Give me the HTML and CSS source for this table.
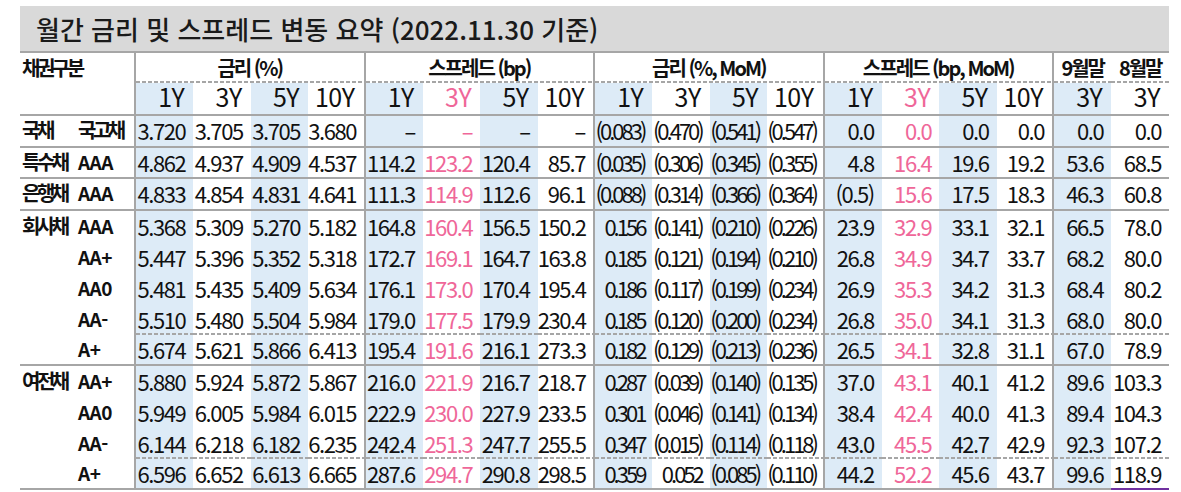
FILE: index.html
```html
<!DOCTYPE html>
<html lang="ko">
<head>
<meta charset="utf-8">
<title>월간 금리 및 스프레드 변동 요약</title>
<link rel="stylesheet" href="styles.css">
</head>
<body>
<div class="page">
  <div class="title">월간 금리 및 스프레드 변동 요약 (2022.11.30 기준)</div>
  <table class="summary">
    <colgroup>
      <col class="c-cat"><col class="c-sub">
      <col><col><col><col>
      <col><col><col><col>
      <col><col><col><col>
      <col><col><col><col>
      <col><col>
    </colgroup>
    <thead>
      <tr class="h1">
        <th colspan="2" class="cat gr">채권구분</th>
        <th colspan="4" class="g gr">금리 (%)</th>
        <th colspan="4" class="g gr">스프레드 (bp)</th>
        <th colspan="4" class="g gr">금리 (%, MoM)</th>
        <th colspan="4" class="g gr">스프레드 (bp, MoM)</th>
        <th class="g">9월말</th>
        <th class="g">8월말</th>
      </tr>
      <tr class="h2">
        <th colspan="2" class="gr"></th>
        <th class="b">1Y</th><th>3Y</th><th class="b">5Y</th><th class="gr">10Y</th>
        <th class="b">1Y</th><th class="p">3Y</th><th class="b">5Y</th><th class="gr">10Y</th>
        <th class="b">1Y</th><th>3Y</th><th class="b">5Y</th><th class="gr">10Y</th>
        <th class="b">1Y</th><th class="p">3Y</th><th class="b">5Y</th><th class="gr">10Y</th>
        <th class="b">3Y</th><th>3Y</th>
      </tr>
    </thead>
    <tbody>
      <tr class="sep tall">
        <td class="k">국채</td><td class="k gr">국고채</td>
        <td class="b">3.720</td><td>3.705</td><td class="b">3.705</td><td class="gr">3.680</td>
        <td class="b">–</td><td class="p">–</td><td class="b">–</td><td class="gr">–</td>
        <td class="b m">(0.083)</td><td class="m">(0.470)</td><td class="b m">(0.541)</td><td class="m gr">(0.547)</td>
        <td class="b">0.0</td><td class="p">0.0</td><td class="b">0.0</td><td class="gr">0.0</td>
        <td class="b">0.0</td><td>0.0</td>
      </tr>
      <tr class="sep">
        <td class="k">특수채</td><td class="s gr">AAA</td>
        <td class="b">4.862</td><td>4.937</td><td class="b">4.909</td><td class="gr">4.537</td>
        <td class="b">114.2</td><td class="p">123.2</td><td class="b">120.4</td><td class="gr">85.7</td>
        <td class="b m">(0.035)</td><td class="m">(0.306)</td><td class="b m">(0.345)</td><td class="m gr">(0.355)</td>
        <td class="b">4.8</td><td class="p">16.4</td><td class="b">19.6</td><td class="gr">19.2</td>
        <td class="b">53.6</td><td>68.5</td>
      </tr>
      <tr class="sep tall">
        <td class="k">은행채</td><td class="s gr">AAA</td>
        <td class="b">4.833</td><td>4.854</td><td class="b">4.831</td><td class="gr">4.641</td>
        <td class="b">111.3</td><td class="p">114.9</td><td class="b">112.6</td><td class="gr">96.1</td>
        <td class="b m">(0.088)</td><td class="m">(0.314)</td><td class="b m">(0.366)</td><td class="m gr">(0.364)</td>
        <td class="b">(0.5)</td><td class="p">15.6</td><td class="b">17.5</td><td class="gr">18.3</td>
        <td class="b">46.3</td><td>60.8</td>
      </tr>
      <tr>
        <td class="k">회사채</td><td class="s gr">AAA</td>
        <td class="b">5.368</td><td>5.309</td><td class="b">5.270</td><td class="gr">5.182</td>
        <td class="b">164.8</td><td class="p">160.4</td><td class="b">156.5</td><td class="gr">150.2</td>
        <td class="b m">0.156</td><td class="m">(0.141)</td><td class="b m">(0.210)</td><td class="m gr">(0.226)</td>
        <td class="b">23.9</td><td class="p">32.9</td><td class="b">33.1</td><td class="gr">32.1</td>
        <td class="b">66.5</td><td>78.0</td>
      </tr>
      <tr>
        <td class="k"></td><td class="s gr">AA+</td>
        <td class="b">5.447</td><td>5.396</td><td class="b">5.352</td><td class="gr">5.318</td>
        <td class="b">172.7</td><td class="p">169.1</td><td class="b">164.7</td><td class="gr">163.8</td>
        <td class="b m">0.185</td><td class="m">(0.121)</td><td class="b m">(0.194)</td><td class="m gr">(0.210)</td>
        <td class="b">26.8</td><td class="p">34.9</td><td class="b">34.7</td><td class="gr">33.7</td>
        <td class="b">68.2</td><td>80.0</td>
      </tr>
      <tr>
        <td class="k"></td><td class="s gr">AA0</td>
        <td class="b">5.481</td><td>5.435</td><td class="b">5.409</td><td class="gr">5.634</td>
        <td class="b">176.1</td><td class="p">173.0</td><td class="b">170.4</td><td class="gr">195.4</td>
        <td class="b m">0.186</td><td class="m">(0.117)</td><td class="b m">(0.199)</td><td class="m gr">(0.234)</td>
        <td class="b">26.9</td><td class="p">35.3</td><td class="b">34.2</td><td class="gr">31.3</td>
        <td class="b">68.4</td><td>80.2</td>
      </tr>
      <tr class="dash">
        <td class="k"></td><td class="s gr">AA-</td>
        <td class="b">5.510</td><td>5.480</td><td class="b">5.504</td><td class="gr">5.984</td>
        <td class="b">179.0</td><td class="p">177.5</td><td class="b">179.9</td><td class="gr">230.4</td>
        <td class="b m">0.185</td><td class="m">(0.120)</td><td class="b m">(0.200)</td><td class="m gr">(0.234)</td>
        <td class="b">26.8</td><td class="p">35.0</td><td class="b">34.1</td><td class="gr">31.3</td>
        <td class="b">68.0</td><td>80.0</td>
      </tr>
      <tr class="sep">
        <td class="k"></td><td class="s gr">A+</td>
        <td class="b">5.674</td><td>5.621</td><td class="b">5.866</td><td class="gr">6.413</td>
        <td class="b">195.4</td><td class="p">191.6</td><td class="b">216.1</td><td class="gr">273.3</td>
        <td class="b m">0.182</td><td class="m">(0.129)</td><td class="b m">(0.213)</td><td class="m gr">(0.236)</td>
        <td class="b">26.5</td><td class="p">34.1</td><td class="b">32.8</td><td class="gr">31.1</td>
        <td class="b">67.0</td><td>78.9</td>
      </tr>
      <tr>
        <td class="k">여전채</td><td class="s gr">AA+</td>
        <td class="b">5.880</td><td>5.924</td><td class="b">5.872</td><td class="gr">5.867</td>
        <td class="b">216.0</td><td class="p">221.9</td><td class="b">216.7</td><td class="gr">218.7</td>
        <td class="b m">0.287</td><td class="m">(0.039)</td><td class="b m">(0.140)</td><td class="m gr">(0.135)</td>
        <td class="b">37.0</td><td class="p">43.1</td><td class="b">40.1</td><td class="gr">41.2</td>
        <td class="b">89.6</td><td>103.3</td>
      </tr>
      <tr>
        <td class="k"></td><td class="s gr">AA0</td>
        <td class="b">5.949</td><td>6.005</td><td class="b">5.984</td><td class="gr">6.015</td>
        <td class="b">222.9</td><td class="p">230.0</td><td class="b">227.9</td><td class="gr">233.5</td>
        <td class="b m">0.301</td><td class="m">(0.046)</td><td class="b m">(0.141)</td><td class="m gr">(0.134)</td>
        <td class="b">38.4</td><td class="p">42.4</td><td class="b">40.0</td><td class="gr">41.3</td>
        <td class="b">89.4</td><td>104.3</td>
      </tr>
      <tr class="dash">
        <td class="k"></td><td class="s gr">AA-</td>
        <td class="b">6.144</td><td>6.218</td><td class="b">6.182</td><td class="gr">6.235</td>
        <td class="b">242.4</td><td class="p">251.3</td><td class="b">247.7</td><td class="gr">255.5</td>
        <td class="b m">0.347</td><td class="m">(0.015)</td><td class="b m">(0.114)</td><td class="m gr">(0.118)</td>
        <td class="b">43.0</td><td class="p">45.5</td><td class="b">42.7</td><td class="gr">42.9</td>
        <td class="b">92.3</td><td>107.2</td>
      </tr>
      <tr class="sep last">
        <td class="k"></td><td class="s gr">A+</td>
        <td class="b">6.596</td><td>6.652</td><td class="b">6.613</td><td class="gr">6.665</td>
        <td class="b">287.6</td><td class="p">294.7</td><td class="b">290.8</td><td class="gr">298.5</td>
        <td class="b m">0.359</td><td class="m">0.052</td><td class="b m">(0.085)</td><td class="m gr">(0.110)</td>
        <td class="b">44.2</td><td class="p">52.2</td><td class="b">45.6</td><td class="gr">43.7</td>
        <td class="b">99.6</td><td class="end">118.9</td>
      </tr>
    </tbody>
  </table>
</div>
</body>
</html>
```

FILE: styles.css
```css
body {
  margin: 0;
  background: #ffffff;
  font-family: "Noto Sans CJK KR", "Noto Sans", sans-serif;
  color: #111111;
}

.page {
  width: 1149px;
  padding: 6px 0 0 20px;
}

.title {
  height: 45px;
  display: flex;
  align-items: center;
  padding-left: 16px;
  background: #d9d9d9;
  font-size: 26px;
  font-weight: 500;
  line-height: 30px;
  color: #1a1a1a;
  white-space: nowrap;
}

.summary {
  width: 1149px;
  table-layout: fixed;
  border-collapse: separate;
  border-spacing: 0;
  border-top: 2px solid #a6a6a6;
}

.c-cat { width: 56px; }
.c-sub { width: 60px; }

.summary th,
.summary td {
  padding: 0;
  box-sizing: border-box;
  white-space: nowrap;
  vertical-align: middle;
  overflow: visible;
  line-height: 22px;
}

/* header row 1 */
.h1 th {
  height: 30px;
  font-size: 20px;
  font-weight: 700;
  letter-spacing: -2px;
  text-align: center;
  padding-bottom: 1px;
}

.h1 th.cat {
  text-align: left;
  padding-left: 2px;
  font-size: 20px;
  letter-spacing: -3.5px;
}

.h1 th.g {
  background-image: linear-gradient(90deg, #a6a6a6 4px, transparent 4px);
  background-size: 6px 2px;
  background-repeat: repeat-x;
  background-position: 0 100%;
}

/* header row 2 */
.h2 th {
  height: 33px;
  font-size: 25px;
  font-weight: 400;
  letter-spacing: -0.5px;
  text-align: right;
  padding-right: 9px;
  padding-bottom: 5px;
  border-bottom: 2px solid #a6a6a6;
}

/* body */
.summary tbody td {
  height: 31px;
  font-size: 22px;
  letter-spacing: -1.4px;
  text-align: right;
  padding-right: 8px;
  padding-bottom: 2px;
}

.summary tbody tr.tall td { height: 32px; }

.summary tbody td.k {
  text-align: left;
  padding-left: 2px;
  padding-right: 0;
  font-size: 20px;
  font-weight: 700;
  letter-spacing: -3.5px;
}

.summary tbody td.s {
  text-align: left;
  padding-left: 2px;
  padding-right: 0;
  font-size: 19px;
  font-weight: 700;
  letter-spacing: -0.5px;
}

.summary tbody td.m { letter-spacing: -3px; }

.summary tbody tr.sep td { border-bottom: 2px solid #a6a6a6; }

.summary tbody tr.dash td:nth-child(n+3) {
  background-image: linear-gradient(90deg, #a6a6a6 4px, transparent 4px);
  background-size: 6px 2px;
  background-repeat: repeat-x;
  background-position: 0 100%;
}

.summary tbody tr.last td.end { border-bottom-color: #7030a0; }

.summary .gr { border-right: 2px solid #a6a6a6; }
.summary .b { background-color: #ddebf7; }
.summary .p { color: #ef6799; }
```
